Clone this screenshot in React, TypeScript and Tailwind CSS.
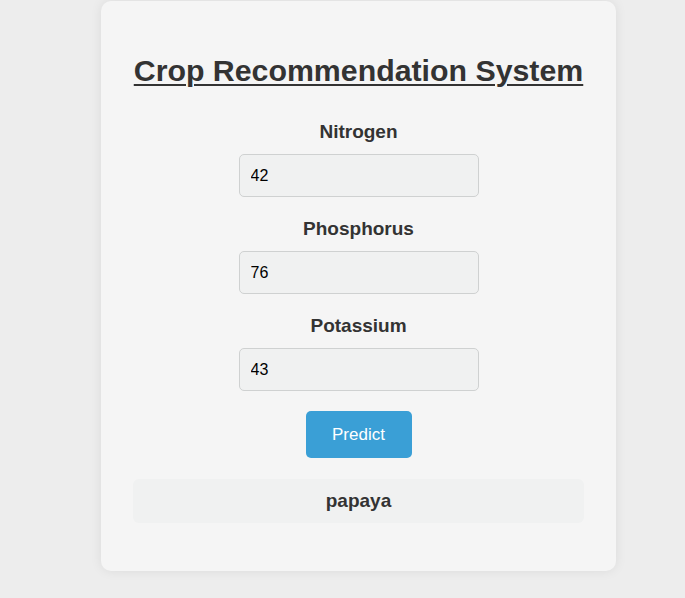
import React, { useState } from 'react';

const fields = [
  { id: 'nitrogen', label: 'Nitrogen', value: '42' },
  { id: 'phosphorus', label: 'Phosphorus', value: '76' },
  { id: 'potassium', label: 'Potassium', value: '43' },
];

export default function App() {
  const [values, setValues] = useState<Record<string, string>>(
    Object.fromEntries(fields.map((f) => [f.id, f.value]))
  );

  return (
    <div className="min-h-[598px] w-full bg-[#ededed] font-['Liberation_Sans',Arial,sans-serif] text-[#333]">
      <div className="pl-[101px] pt-px">
        {/* Card */}
        <div className="flex h-[570px] w-[515px] flex-col items-center rounded-[10px] bg-[#f5f5f5] px-8 shadow-[0_0_12px_rgba(0,0,0,0.08)]">
          <h1 className="mt-[52px] whitespace-nowrap text-[30.3px] leading-[36px] font-bold underline decoration-2 underline-offset-[3px]">
            Crop Recommendation System
          </h1>

          <div className="mt-[29px] flex flex-col items-center">
            {fields.map((f) => (
              <div key={f.id} className="mb-[18px] flex flex-col items-center">
                <label htmlFor={f.id} className="mt-[2px] text-[19px] leading-[24px] font-bold">
                  {f.label}
                </label>
                <input
                  id={f.id}
                  type="text"
                  value={values[f.id]}
                  onChange={(e) => setValues({ ...values, [f.id]: e.target.value })}
                  className="mt-[10px] h-[43px] w-[240px] rounded-[5px] border border-[#cfd1d1] bg-[#f0f1f1] px-[11px] text-[16px] text-black outline-none"
                />
              </div>
            ))}
          </div>

          <button className="mt-[2px] h-[47px] w-[106px] rounded-[5px] bg-[#3a9fd6] text-[17px] text-white">
            Predict
          </button>

          <div className="mt-[21px] flex h-[44px] w-full items-center justify-center rounded-[6px] bg-[#f0f1f1] text-[19px] font-bold">
            papaya
          </div>
        </div>
      </div>
    </div>
  );
}
